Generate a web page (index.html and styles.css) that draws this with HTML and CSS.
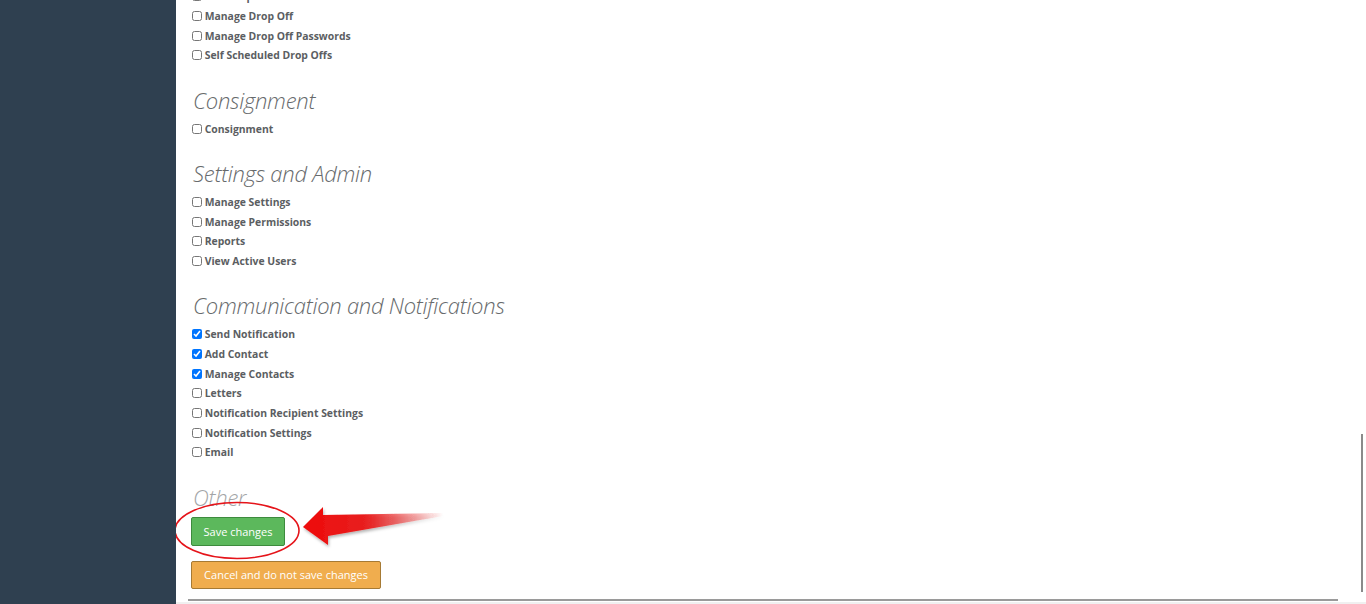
FILE: index.html
```html
<!DOCTYPE html>
<html>
<head>
<meta charset="utf-8">
<link rel="stylesheet" href="styles.css">
</head>
<body>
<div class="layout">
  <aside class="sidebar"></aside>
  <main class="main">
    <div class="content">
      <section class="group">
        <label class="row"><input type="checkbox"> Add Drop Off</label>
        <label class="row"><input type="checkbox"> Manage Drop Off</label>
        <label class="row"><input type="checkbox"> Manage Drop Off Passwords</label>
        <label class="row"><input type="checkbox"> Self Scheduled Drop Offs</label>
      </section>
      <section class="group">
        <h3 class="title">Consignment</h3>
        <label class="row"><input type="checkbox"> Consignment</label>
      </section>
      <section class="group">
        <h3 class="title">Settings and Admin</h3>
        <label class="row"><input type="checkbox"> Manage Settings</label>
        <label class="row"><input type="checkbox"> Manage Permissions</label>
        <label class="row"><input type="checkbox"> Reports</label>
        <label class="row"><input type="checkbox"> View Active Users</label>
      </section>
      <section class="group">
        <h3 class="title">Communication and Notifications</h3>
        <label class="row"><input type="checkbox" checked> Send Notification</label>
        <label class="row"><input type="checkbox" checked> Add Contact</label>
        <label class="row"><input type="checkbox" checked> Manage Contacts</label>
        <label class="row"><input type="checkbox"> Letters</label>
        <label class="row"><input type="checkbox"> Notification Recipient Settings</label>
        <label class="row"><input type="checkbox"> Notification Settings</label>
        <label class="row"><input type="checkbox"> Email</label>
      </section>
      <section class="group">
        <h3 class="title other">Other</h3>
        <div class="actions">
          <button class="btn btn-save">Save changes</button>
          <button class="btn btn-cancel">Cancel and do not save changes</button>
          <svg class="annot" width="300" height="70" viewBox="0 0 300 70">
            <defs>
              <linearGradient id="ag" x1="0" y1="0" x2="1" y2="0">
                <stop offset="0" stop-color="#ee0a0a"/>
                <stop offset="0.45" stop-color="#e82020"/>
                <stop offset="1" stop-color="#e82020" stop-opacity="0"/>
              </linearGradient>
              <filter id="sh" x="-10%" y="-30%" width="130%" height="180%">
                <feDropShadow dx="1" dy="2" stdDeviation="1.5" flood-color="#000" flood-opacity="0.3"/>
              </filter>
            </defs>
            <ellipse cx="62" cy="28.5" rx="62" ry="28" fill="none" stroke="#e5141a" stroke-width="1.6"/>
            <polygon filter="url(#sh)" fill="url(#ag)" points="128,25 148,5 148,13 268,11 268,14 153,34 153,43"/>
          </svg>
        </div>
      </section>
      <div class="rule"></div>
    </div>
    <div class="footer"></div>
    <div class="scroll-mark"></div>
  </main>
</div>
</body>
</html>
```

FILE: styles.css
```css
html, body {
  margin: 0;
  padding: 0;
  height: 100%;
  overflow: hidden;
  background: #fff;
}
body {
  font-family: "Open Sans", "Liberation Sans", sans-serif;
  color: #676a6c;
}
.layout {
  display: flex;
  height: 604px;
}
.sidebar {
  width: 176px;
  flex: none;
  background: #2f4050;
}
.main {
  flex: 1;
  position: relative;
  background: #fff;
  overflow: hidden;
}
.content {
  margin-top: -13.5px;
  padding-left: 16px;
  padding-right: 28px;
}
.group {
  display: flex;
  flex-direction: column;
}
.title {
  margin: 21.7px 0 6px 1px;
  font-size: 22px;
  line-height: 26px;
  font-weight: 300;
  font-style: italic;
  color: #676a6c;
  letter-spacing: -0.25px;
}
.title.other {
  color: #a3a5a7;
}
.row {
  display: flex;
  align-items: center;
  height: 19.67px;
  font-size: 10.4px;
  font-weight: 700;
  color: #5b5e62;
  white-space: pre;
}
.row input {
  width: 10px;
  height: 10px;
  margin: 0;
}
.actions {
  position: relative;
  display: flex;
  flex-direction: column;
  align-items: flex-start;
  padding-top: 1px;
  gap: 15px;
}
.btn {
  font-family: "Open Sans", "Liberation Sans", sans-serif;
  font-size: 11px;
  color: #fff;
  border-radius: 2px;
  cursor: pointer;
  margin-left: -1px;
}
.btn-save {
  background: #5cb85c;
  border: 1px solid #3d8b3d;
  height: 29px;
  width: 94px;
}
.btn-cancel {
  background: #f0ad4e;
  border: 1px solid #a67a34;
  height: 28px;
  width: 190px;
}
.annot {
  position: absolute;
  left: -17px;
  top: -14px;
  overflow: visible;
  pointer-events: none;
}
.rule {
  margin-top: 10px;
  margin-left: -4px;
  height: 2px;
  background: #9a9a9a;
}
.footer {
  margin-top: 1px;
  height: 12px;
  background: #f0f0f0;
}
.scroll-mark {
  position: absolute;
  right: 3px;
  top: 434px;
  width: 2px;
  height: 158px;
  background: #8a8a8a;
}
```
